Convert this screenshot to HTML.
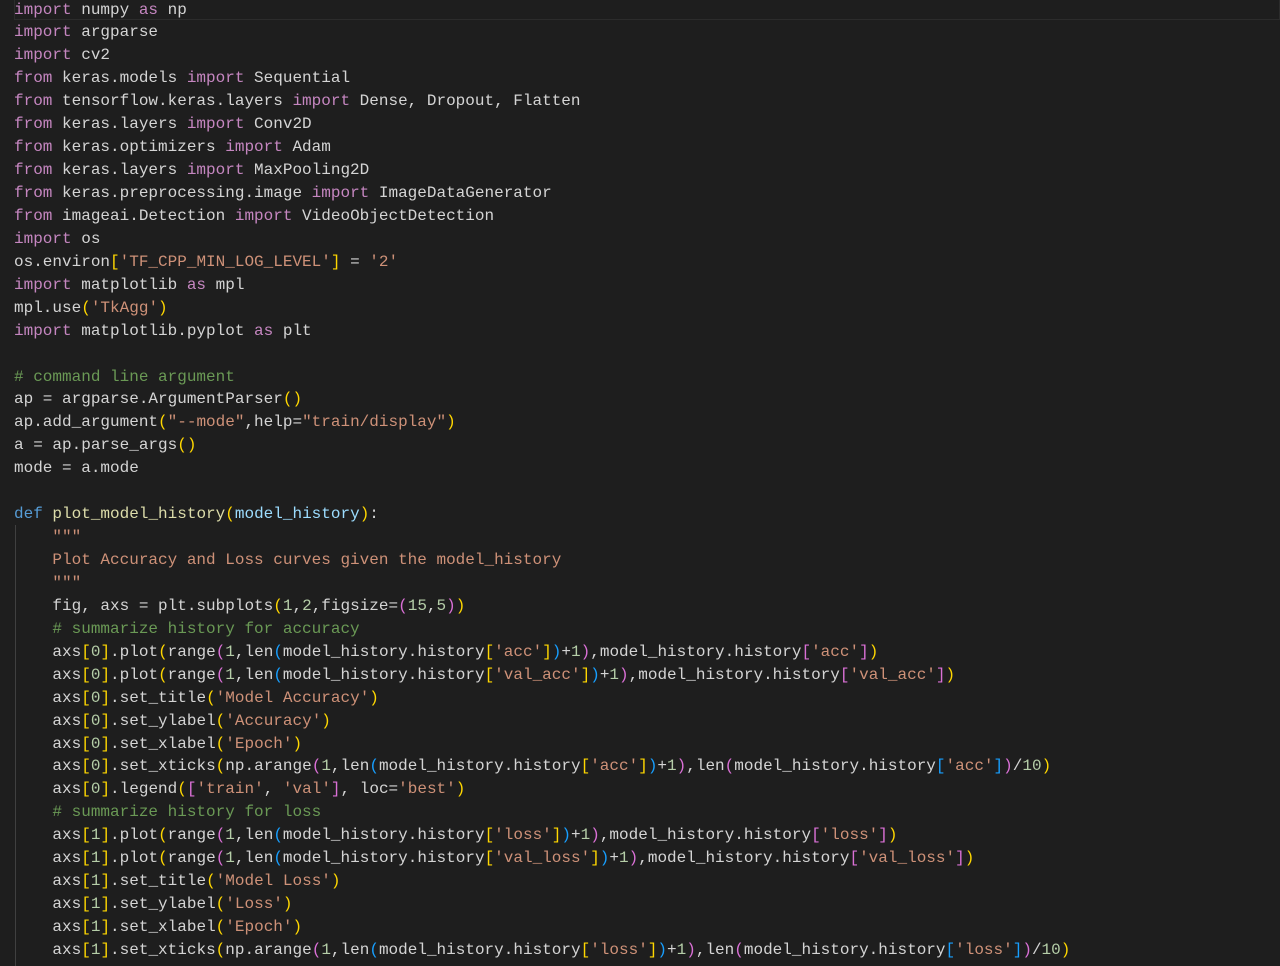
<!DOCTYPE html>
<html><head><meta charset="utf-8"><style>
html,body{margin:0;padding:0;background:#1e1e1e;width:1280px;height:966px;overflow:hidden}
#ed{position:absolute;left:14px;top:-1.5px;font-family:"Liberation Mono",monospace;font-size:16px;line-height:22.93px;color:#d4d4d4;white-space:pre}
.hl{position:absolute;left:14px;top:-1px;width:1266px;height:21px;border:1px solid #2c2c2c;box-sizing:border-box}
.g{position:absolute;left:15px;top:525px;width:1px;height:441px;background:#404040}
.k{color:#c586c0}.s{color:#ce9178}.c{color:#6a9955}.d{color:#569cd6}.f{color:#dcdcaa}.p{color:#9cdcfe}.n{color:#b5cea8}
.Y{color:#ffd700}.M{color:#da70d6}.B{color:#179fff}
</style></head><body>
<div class="hl"></div><div class="g"></div>
<div id="ed"><span class="k">import</span> numpy <span class="k">as</span> np
<span class="k">import</span> argparse
<span class="k">import</span> cv2
<span class="k">from</span> keras.models <span class="k">import</span> Sequential
<span class="k">from</span> tensorflow.keras.layers <span class="k">import</span> Dense, Dropout, Flatten
<span class="k">from</span> keras.layers <span class="k">import</span> Conv2D
<span class="k">from</span> keras.optimizers <span class="k">import</span> Adam
<span class="k">from</span> keras.layers <span class="k">import</span> MaxPooling2D
<span class="k">from</span> keras.preprocessing.image <span class="k">import</span> ImageDataGenerator
<span class="k">from</span> imageai.Detection <span class="k">import</span> VideoObjectDetection
<span class="k">import</span> os
os.environ<span class="Y">[</span><span class="s">'TF_CPP_MIN_LOG_LEVEL'</span><span class="Y">]</span> = <span class="s">'2'</span>
<span class="k">import</span> matplotlib <span class="k">as</span> mpl
mpl.use<span class="Y">(</span><span class="s">'TkAgg'</span><span class="Y">)</span>
<span class="k">import</span> matplotlib.pyplot <span class="k">as</span> plt

<span class="c"># command line argument</span>
ap = argparse.ArgumentParser<span class="Y">()</span>
ap.add_argument<span class="Y">(</span><span class="s">"--mode"</span>,help=<span class="s">"train/display"</span><span class="Y">)</span>
a = ap.parse_args<span class="Y">()</span>
mode = a.mode

<span class="d">def</span> <span class="f">plot_model_history</span><span class="Y">(</span><span class="p">model_history</span><span class="Y">)</span>:
    <span class="s">"""</span>
<span class="s">    Plot Accuracy and Loss curves given the model_history</span>
<span class="s">    """</span>
    fig, axs = plt.subplots<span class="Y">(</span><span class="n">1</span>,<span class="n">2</span>,figsize=<span class="M">(</span><span class="n">15</span>,<span class="n">5</span><span class="M">)</span><span class="Y">)</span>
    <span class="c"># summarize history for accuracy</span>
    axs<span class="Y">[</span><span class="n">0</span><span class="Y">]</span>.plot<span class="Y">(</span>range<span class="M">(</span><span class="n">1</span>,len<span class="B">(</span>model_history.history<span class="Y">[</span><span class="s">'acc'</span><span class="Y">]</span><span class="B">)</span>+<span class="n">1</span><span class="M">)</span>,model_history.history<span class="M">[</span><span class="s">'acc'</span><span class="M">]</span><span class="Y">)</span>
    axs<span class="Y">[</span><span class="n">0</span><span class="Y">]</span>.plot<span class="Y">(</span>range<span class="M">(</span><span class="n">1</span>,len<span class="B">(</span>model_history.history<span class="Y">[</span><span class="s">'val_acc'</span><span class="Y">]</span><span class="B">)</span>+<span class="n">1</span><span class="M">)</span>,model_history.history<span class="M">[</span><span class="s">'val_acc'</span><span class="M">]</span><span class="Y">)</span>
    axs<span class="Y">[</span><span class="n">0</span><span class="Y">]</span>.set_title<span class="Y">(</span><span class="s">'Model Accuracy'</span><span class="Y">)</span>
    axs<span class="Y">[</span><span class="n">0</span><span class="Y">]</span>.set_ylabel<span class="Y">(</span><span class="s">'Accuracy'</span><span class="Y">)</span>
    axs<span class="Y">[</span><span class="n">0</span><span class="Y">]</span>.set_xlabel<span class="Y">(</span><span class="s">'Epoch'</span><span class="Y">)</span>
    axs<span class="Y">[</span><span class="n">0</span><span class="Y">]</span>.set_xticks<span class="Y">(</span>np.arange<span class="M">(</span><span class="n">1</span>,len<span class="B">(</span>model_history.history<span class="Y">[</span><span class="s">'acc'</span><span class="Y">]</span><span class="B">)</span>+<span class="n">1</span><span class="M">)</span>,len<span class="M">(</span>model_history.history<span class="B">[</span><span class="s">'acc'</span><span class="B">]</span><span class="M">)</span>/<span class="n">10</span><span class="Y">)</span>
    axs<span class="Y">[</span><span class="n">0</span><span class="Y">]</span>.legend<span class="Y">(</span><span class="M">[</span><span class="s">'train'</span>, <span class="s">'val'</span><span class="M">]</span>, loc=<span class="s">'best'</span><span class="Y">)</span>
    <span class="c"># summarize history for loss</span>
    axs<span class="Y">[</span><span class="n">1</span><span class="Y">]</span>.plot<span class="Y">(</span>range<span class="M">(</span><span class="n">1</span>,len<span class="B">(</span>model_history.history<span class="Y">[</span><span class="s">'loss'</span><span class="Y">]</span><span class="B">)</span>+<span class="n">1</span><span class="M">)</span>,model_history.history<span class="M">[</span><span class="s">'loss'</span><span class="M">]</span><span class="Y">)</span>
    axs<span class="Y">[</span><span class="n">1</span><span class="Y">]</span>.plot<span class="Y">(</span>range<span class="M">(</span><span class="n">1</span>,len<span class="B">(</span>model_history.history<span class="Y">[</span><span class="s">'val_loss'</span><span class="Y">]</span><span class="B">)</span>+<span class="n">1</span><span class="M">)</span>,model_history.history<span class="M">[</span><span class="s">'val_loss'</span><span class="M">]</span><span class="Y">)</span>
    axs<span class="Y">[</span><span class="n">1</span><span class="Y">]</span>.set_title<span class="Y">(</span><span class="s">'Model Loss'</span><span class="Y">)</span>
    axs<span class="Y">[</span><span class="n">1</span><span class="Y">]</span>.set_ylabel<span class="Y">(</span><span class="s">'Loss'</span><span class="Y">)</span>
    axs<span class="Y">[</span><span class="n">1</span><span class="Y">]</span>.set_xlabel<span class="Y">(</span><span class="s">'Epoch'</span><span class="Y">)</span>
    axs<span class="Y">[</span><span class="n">1</span><span class="Y">]</span>.set_xticks<span class="Y">(</span>np.arange<span class="M">(</span><span class="n">1</span>,len<span class="B">(</span>model_history.history<span class="Y">[</span><span class="s">'loss'</span><span class="Y">]</span><span class="B">)</span>+<span class="n">1</span><span class="M">)</span>,len<span class="M">(</span>model_history.history<span class="B">[</span><span class="s">'loss'</span><span class="B">]</span><span class="M">)</span>/<span class="n">10</span><span class="Y">)</span>
</div>
</body></html>
